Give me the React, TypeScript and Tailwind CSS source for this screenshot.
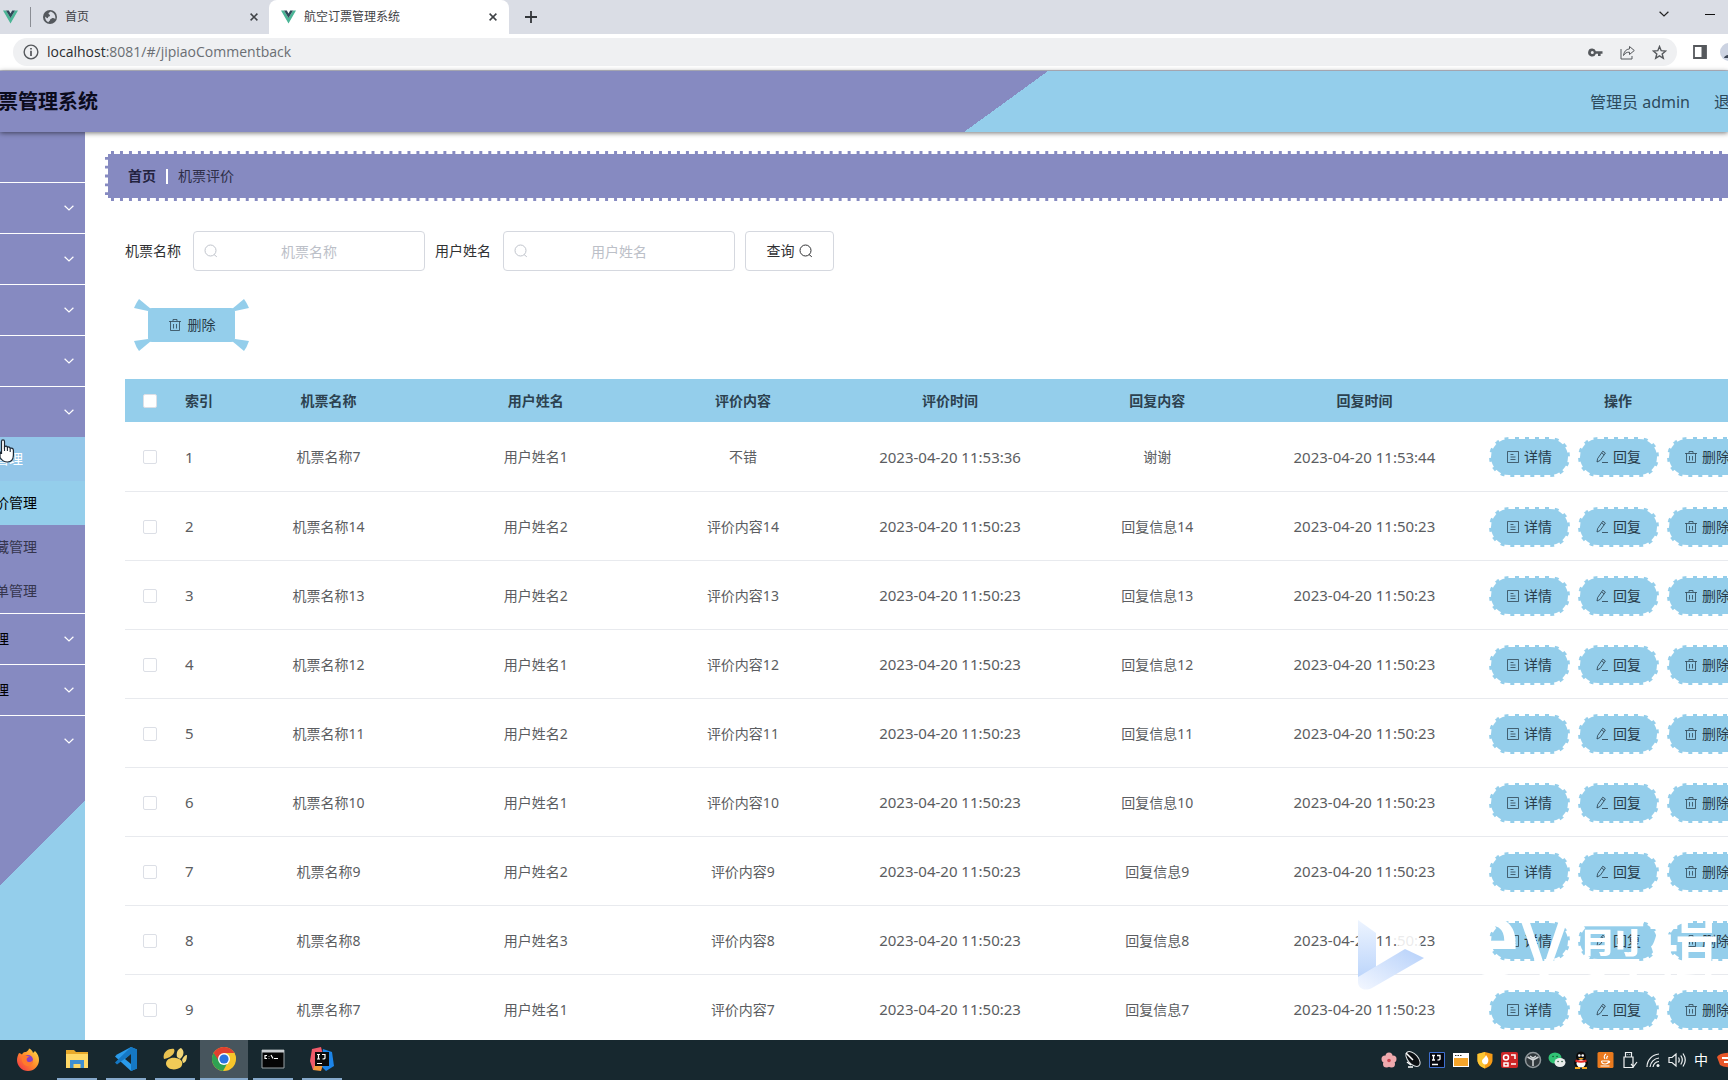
import type { ReactNode } from "react";

type Row = { id: number; ticket: string; user: string; content: string; time: string; reply: string; replyTime: string };

const T = "2023-04-20 11:50:23";

const rows: Row[] = [
  { id: 1, ticket: "机票名称7", user: "用户姓名1", content: "不错", time: "2023-04-20 11:53:36", reply: "谢谢", replyTime: "2023-04-20 11:53:44" },
  { id: 2, ticket: "机票名称14", user: "用户姓名2", content: "评价内容14", time: T, reply: "回复信息14", replyTime: T },
  { id: 3, ticket: "机票名称13", user: "用户姓名2", content: "评价内容13", time: T, reply: "回复信息13", replyTime: T },
  { id: 4, ticket: "机票名称12", user: "用户姓名1", content: "评价内容12", time: T, reply: "回复信息12", replyTime: T },
  { id: 5, ticket: "机票名称11", user: "用户姓名2", content: "评价内容11", time: T, reply: "回复信息11", replyTime: T },
  { id: 6, ticket: "机票名称10", user: "用户姓名1", content: "评价内容10", time: T, reply: "回复信息10", replyTime: T },
  { id: 7, ticket: "机票名称9", user: "用户姓名2", content: "评价内容9", time: T, reply: "回复信息9", replyTime: T },
  { id: 8, ticket: "机票名称8", user: "用户姓名3", content: "评价内容8", time: T, reply: "回复信息8", replyTime: T },
  { id: 9, ticket: "机票名称7", user: "用户姓名1", content: "评价内容7", time: T, reply: "回复信息7", replyTime: T },
];

function VueLogo() {
  return (
    <svg className="h-[14px] w-[15px] shrink-0" viewBox="0 0 15 14" aria-hidden="true">
      <path d="M0 .5h3L7.500 8 12 .5h3L7.500 13.500z" fill="#4bb596" />
      <path d="M3 .5h2.800L7.500 3.500 9.200.5H12L7.500 8z" fill="#2f4858" />
    </svg>
  );
}

function GlobeIcon() {
  return (
    <svg className="h-[14px] w-[14px] shrink-0" viewBox="0 0 14 14" aria-hidden="true">
      <circle cx="7" cy="7" r="7" fill="#54585d" />
      <path d="M7.500 1.500c-.8 1.300-2 1-2 2s1.500.8 1.500 2-2 .8-2 2-1 .6-3-1c0 3 1.500 5 3.500 5.800 0-1.500 1.500-1 1.500-2.300 0-1 1-.7 2-1.700.8-.8 2-.3 3.300.7.600-3-1-6.500-4.800-7.500z" fill="#dadde5" />
    </svg>
  );
}

function CloseIcon() {
  return (
    <svg className="h-2 w-2" viewBox="0 0 8 8" aria-hidden="true">
      <path d="M.6.6l6.800 6.800M7.400.6L.6 7.400" stroke="#3f4246" strokeWidth="1.500" />
    </svg>
  );
}

function SearchIcon() {
  return (
    <svg className="h-[14px] w-[14px] shrink-0" viewBox="0 0 14 14" fill="none" stroke="currentColor" aria-hidden="true">
      <circle cx="6.500" cy="6.500" r="5.500" />
      <path d="M10 10.500l2.800 2.300" />
    </svg>
  );
}

function TrashIcon() {
  return (
    <svg className="h-[14px] w-[14px] shrink-0" viewBox="0 0 14 14" fill="none" stroke="currentColor" strokeOpacity=".75" aria-hidden="true">
      <path d="M1 3.500h12M2.500 3.500v9h9v-9M5 3V1.500h4V3M5.500 6v4.500M8.500 6v4.500" />
    </svg>
  );
}

function DetailIcon() {
  return (
    <svg className="h-[14px] w-[14px] shrink-0" viewBox="0 0 14 14" fill="none" stroke="currentColor" strokeOpacity=".75" aria-hidden="true">
      <path d="M1.500 1.500h11v11h-11zM4.500 4.500h3M4.500 7h5M4.500 9.500h5" />
    </svg>
  );
}

function EditIcon() {
  return (
    <svg className="h-[14px] w-[14px] shrink-0" viewBox="0 0 14 14" fill="none" stroke="currentColor" strokeOpacity=".8" aria-hidden="true">
      <path d="M2 12l.6-3.400L7.800 1.200l2.600 1.800-5.200 7.400zM6.600 3l2.600 1.800M7 12.500h6" />
    </svg>
  );
}

function ChevronDown() {
  return (
    <svg className="h-[6px] w-[10px]" viewBox="0 0 10 6" fill="none" stroke="currentColor" strokeWidth="1.200" aria-hidden="true">
      <path d="M.6.7L5 5 9.400.7" />
    </svg>
  );
}

function BrowserChrome() {
  return (
    <div className="shrink-0 bg-white">
      <div className="flex h-[34px] items-stretch bg-[#dadde5]">
        <div className="flex w-[269px] shrink-0 items-center pr-[7px]">
          <span className="ml-[3px]"><VueLogo /></span>
          <span className="ml-3 h-5 w-px bg-[#8a8d94]" />
          <span className="ml-3"><GlobeIcon /></span>
          <span className="ml-2 grow text-xs text-[#3f4246]">首页</span>
          <button aria-label="关闭首页" className="p-1"><CloseIcon /></button>
        </div>
        <div className="flex w-[240px] shrink-0 items-center rounded-t-lg bg-white pr-2 pl-3">
          <VueLogo />
          <span className="ml-2 grow text-xs text-[#3f4246]">航空订票管理系统</span>
          <button aria-label="关闭标签" className="p-1"><CloseIcon /></button>
        </div>
        <button aria-label="新标签页" className="ml-4 self-center">
          <svg className="h-3 w-3" viewBox="0 0 12 12" aria-hidden="true">
            <path d="M6 0v12M0 6h12" stroke="#33363a" strokeWidth="1.800" />
          </svg>
        </button>
        <div className="ml-auto flex items-center gap-9 pr-[13px] pb-1.5 text-[#222]">
          <ChevronDown />
          <span className="h-px w-[10px] bg-[#111]" />
        </div>
      </div>
      <div className="flex h-[37px] items-center border-b border-[#c3c4d0] pl-[13px]">
        <div className="flex h-7 grow items-center rounded-full bg-[#eff0f2] px-[10px]">
          <svg className="h-4 w-4 shrink-0" viewBox="0 0 14 14" fill="none" stroke="#55585c" strokeWidth="1.200" aria-hidden="true">
            <circle cx="7" cy="7" r="6" />
            <path d="M7 6v4.500M7 3.400v1.400" strokeWidth="1.500" />
          </svg>
          <p className="ml-2 grow font-['Open_Sans','Noto_Sans_CJK_SC',sans-serif] text-sm text-[#6a6e73]">
            <span className="text-[#2a2c30]">localhost</span>:8081/#/jipiaoCommentback
          </p>
          <div className="flex items-center gap-[17px] text-[#55585c]">
            <svg className="h-[15px] w-[15px]" viewBox="0 0 15 15" aria-hidden="true">
              <path d="M4.300 3.500a4 4 0 1 0 3.600 5.300H10V11h2.600V8.800H14.500V6.200H7.900A4 4 0 0 0 4.300 3.500zm0 2.500a1.500 1.500 0 1 1 0 3 1.500 1.500 0 0 1 0-3z" fill="currentColor" />
            </svg>
            <svg className="h-[15px] w-[15px]" viewBox="0 0 15 15" fill="none" stroke="currentColor" aria-hidden="true">
              <path d="M1 4v10h11v-3M9.500 1.500L14.300 5.500 9.500 9.500V7.200C6.800 7 5 8 3.500 10.500 4 6.500 6 4.200 9.500 3.900z" />
            </svg>
            <svg className="h-[15px] w-[15px]" viewBox="0 0 15 15" fill="none" stroke="currentColor" strokeWidth="1.400" aria-hidden="true">
              <path d="M7.500 1.500l1.700 4.200 4.500.3-3.500 2.900 1.100 4.400-3.800-2.400-3.800 2.400 1.100-4.400L1.300 6l4.500-.3z" />
            </svg>
          </div>
        </div>
        <div className="flex w-[51px] shrink-0 items-center gap-[13px] overflow-hidden pl-4">
          <svg className="h-[14px] w-[14px] shrink-0" viewBox="0 0 14 14" aria-hidden="true">
            <path d="M1 1h12v12H1z" fill="none" stroke="#55585c" strokeWidth="1.800" />
            <path d="M8.500 1H13v12H8.500z" fill="#55585c" />
          </svg>
          <svg className="h-[18px] w-[18px] shrink-0" viewBox="0 0 18 18" aria-hidden="true">
            <circle cx="9" cy="9" r="9" fill="#ccd3e2" />
            <path d="M4 15c1-4 9-4 10 0z" fill="#3c4656" />
          </svg>
        </div>
      </div>
    </div>
  );
}

function MenuItem({ label = "", chevron = true, line = true }: { label?: string; chevron?: boolean; line?: boolean }) {
  return (
    <a href="#menu" aria-label={label || "菜单"} className={line ? "flex h-[51px] items-center justify-between border-b border-white pr-[11px] text-black" : "flex h-[50px] items-center justify-between pr-[11px] text-black"}>
      <span className="flex w-[9px] justify-end overflow-hidden text-sm">{label}</span>
      <span className="text-white">{chevron && <ChevronDown />}</span>
    </a>
  );
}

function Sidebar() {
  return (
    <nav className="w-[85px] shrink-0 bg-[linear-gradient(135deg,#868ac1_533px,#94ceeb_533px)] whitespace-nowrap">
      <MenuItem chevron={false} />
      <MenuItem />
      <MenuItem />
      <MenuItem />
      <MenuItem />
      <MenuItem line={false} />
      <div className="border-b border-white text-sm">
        <a href="#manage" className="relative flex h-11 items-center bg-[#93c6e9] text-white">
          <span className="flex w-[23px] justify-end overflow-hidden">管理</span>
          <svg className="absolute top-0.5 left-0 h-6 w-[15px]" viewBox="0 0 15 24" aria-hidden="true">
            <path d="M1.500 14V2.500c0-2.200 3-2.200 3 0V8c1-1.500 2.700-.8 2.900.4 1.200-.9 2.600-.3 2.800.9 1.500-.7 3.200.2 3.200 2V16c0 4-2 7-6 7-3.500 0-5.500-1.500-7.400-4.500V13z" fill="#fff" stroke="#1c2733" strokeWidth="1.200" />
            <path d="M4.500 7v5M7.400 8.500V12M10.200 9.500V13" stroke="#1c2733" strokeWidth="1.100" />
          </svg>
        </a>
        <a href="#comments" className="flex h-11 items-center bg-[#94ceeb] text-black">
          <span className="flex w-[37px] justify-end overflow-hidden">价管理</span>
        </a>
        <a href="#favorites" className="flex h-11 items-center text-[#35354d]">
          <span className="flex w-[37px] justify-end overflow-hidden">藏管理</span>
        </a>
        <a href="#orders" className="flex h-11 items-center text-[#35354d]">
          <span className="flex w-[37px] justify-end overflow-hidden">单管理</span>
        </a>
      </div>
      <MenuItem label="理" />
      <MenuItem label="理" />
      <MenuItem line={false} />
    </nav>
  );
}

function SearchField({ id, label }: { id: string; label: string }) {
  return (
    <div className="flex items-center gap-3">
      <label htmlFor={id} className="text-sm text-[#303133]">{label}</label>
      <div className="relative">
        <span className="absolute top-[13px] left-[11px] text-[#c0c4cc]"><SearchIcon /></span>
        <input id={id} type="text" placeholder={label} className="h-10 w-[232px] rounded border border-[#d5d8df] bg-white px-8 text-center text-sm placeholder:text-[#bcc0c8]" />
      </div>
    </div>
  );
}

function ActionButton({ icon, children }: { icon: ReactNode; children: string }) {
  return (
    <button className="flex h-10 w-[81px] items-center justify-center gap-1 rounded-[20px] border-2 border-dashed border-white bg-[#94ceeb] text-sm text-[#283c4a]">
      {icon}
      {children}
    </button>
  );
}

function BatchDelete() {
  return (
    <button className="relative flex h-[52px] w-[115px] items-center justify-center text-sm text-[#283c4a]">
      <svg className="absolute inset-0 h-full w-full" viewBox="0 0 115 52" fill="#94ceeb" aria-hidden="true">
        <rect x="14" y="9" width="87" height="34" rx="4" />
        <path d="M0 9Q2 4 5 0L17 10 14 12z" />
        <path d="M115 9Q113 4 110 0L98 10 101 12z" />
        <path d="M0 42Q2 48 5 52L17 42 14 40z" />
        <path d="M115 42Q113 48 110 52L98 42 101 40z" />
      </svg>
      <span className="relative flex items-center gap-1.5">
        <TrashIcon />
        删除
      </span>
    </button>
  );
}

function Check({ label }: { label: string }) {
  return <input type="checkbox" aria-label={label} className="mx-auto block h-[14px] w-[14px] appearance-none rounded-[2px] border border-[#dcdfe6] bg-white" />;
}

function CommentTable() {
  return (
    <table className="w-[calc(100%+40px)] table-fixed border-collapse text-center text-sm text-[#5b5d61]">
      <colgroup>
        <col className="w-[50px]" />
        <col className="w-[50px]" />
        <col /><col /><col /><col /><col /><col />
        <col className="w-[300px]" />
      </colgroup>
      <thead className="bg-[#94ceeb] text-[#2c414f]">
        <tr className="h-[43px]">
          <th><Check label="全选" /></th>
          <th className="pl-2.5 text-left font-bold">索引</th>
          <th className="font-bold">机票名称</th>
          <th className="font-bold">用户姓名</th>
          <th className="font-bold">评价内容</th>
          <th className="font-bold">评价时间</th>
          <th className="font-bold">回复内容</th>
          <th className="font-bold">回复时间</th>
          <th className="font-bold">操作</th>
        </tr>
      </thead>
      <tbody>
        {rows.map((r) => (
          <tr key={r.id} className="h-[69px] border-b border-[#e8eaee] [&>td]:pt-0.5">
            <td><Check label={`选择第${r.id}行`} /></td>
            <td className="pl-2.5 text-left text-[15px]">{r.id}</td>
            <td>{r.ticket}</td>
            <td>{r.user}</td>
            <td>{r.content}</td>
            <td className="text-[15px]">{r.time}</td>
            <td>{r.reply}</td>
            <td className="text-[15px]">{r.replyTime}</td>
            <td>
              <div className="flex justify-center gap-2">
                <ActionButton icon={<DetailIcon />}>详情</ActionButton>
                <ActionButton icon={<EditIcon />}>回复</ActionButton>
                <ActionButton icon={<TrashIcon />}>删除</ActionButton>
              </div>
            </td>
          </tr>
        ))}
      </tbody>
    </table>
  );
}

function Watermark() {
  return (
    <div className="pointer-events-none absolute right-0 bottom-10 flex h-[130px] w-[370px] overflow-hidden pt-2.5 whitespace-nowrap text-white">
      <svg className="h-[70px] w-[70px] shrink-0" viewBox="0 0 70 70" aria-hidden="true">
        <defs>
          <linearGradient id="wmBar" x1="0" y1="0" x2="0" y2="1">
            <stop offset="0" stopColor="#edf4ff" />
            <stop offset="1" stopColor="#bcd5fb" />
          </linearGradient>
          <linearGradient id="wmArm" x1="0" y1="1" x2="1" y2="0">
            <stop offset="0" stopColor="#f3f7ff" />
            <stop offset="1" stopColor="#b5d0fa" />
          </linearGradient>
        </defs>
        <path d="M27 10L48 10 61 18 66 38 47 30 38 24z" fill="#fff" fillOpacity=".88" />
        <path d="M0 0L18 13V47L0 58z" fill="url(#wmBar)" />
        <path d="M0 57L47 29 66 38 14 68C6 72 0 68 0 62z" fill="url(#wmArm)" />
      </svg>
      <div className="ml-8 flex items-baseline leading-7 font-medium">
        <span className="text-[106px] leading-7">e</span>
        <span className="text-[76px] leading-7">V</span>
        <span className="ml-2 text-[72px] leading-7">剪辑</span>
      </div>
    </div>
  );
}

function Task({ children, active, open = true }: { children: ReactNode; active?: boolean; open?: boolean }) {
  return (
    <span className={active ? "flex h-full w-[48px] flex-col items-center bg-[#47555d]" : "flex h-full w-[40px] flex-col items-center"}>
      <span className="flex grow items-center">
        <svg className="h-6 w-6" viewBox="0 0 24 24" aria-hidden="true">{children}</svg>
      </span>
      <span className={open ? "h-0.5 w-full bg-[#86a9cb]" : "h-0.5 w-full"} />
    </span>
  );
}

function Tray({ children }: { children: ReactNode }) {
  return <svg className="h-[18px] w-[18px] shrink-0" viewBox="0 0 18 18" fill="none" aria-hidden="true">{children}</svg>;
}

function Taskbar() {
  return (
    <footer className="flex h-10 shrink-0 items-stretch justify-between overflow-hidden bg-[#17282f]">
      <div className="flex gap-[9px] pl-2">
        <Task open={false}>
          <defs>
            <linearGradient id="fox" x1="1" y1="0" x2="0" y2="1">
              <stop offset="0" stopColor="#ffe24a" />
              <stop offset=".5" stopColor="#ff8a2a" />
              <stop offset="1" stopColor="#f0284e" />
            </linearGradient>
          </defs>
          <path d="M3 6c1 0 2 .5 3 1.500C7 5 9 5 10 5c1-1 2.500-1 3-3.500 2.500 1 3.500 2.500 4 4.500l2-2c3 3 4 6 4 9a11 11 0 0 1-22 0c0-3 1-5 2-7z" fill="url(#fox)" />
          <circle cx="12" cy="13" r="5" fill="#8b3fc2" />
          <path d="M6 9c3-2 6 0 8 1-3 0-4 2-3 4s5 1 6-1c0 4-3 6-6 6-4-1-6-5-5-10z" fill="#ff7a2c" />
        </Task>
        <Task>
          <path d="M1 3h8l2 2h12v16H1z" fill="#e8a92b" />
          <path d="M1 7h22v14H1z" fill="#ffd867" />
          <path d="M5 13h14v8h-3.500v-4h-7v4H5z" fill="#3f8fd2" />
        </Task>
        <Task>
          <path d="M17 0l6 2.500v19L17 24 1 9.500 3 7.500z" fill="#2a9bea" />
          <path d="M17 0l6 2.500v19L17 24V7L3 17.500 1 15.500z" fill="#1578c4" />
          <path d="M17 7v10l-6-5z" fill="#17282f" />
        </Task>
        <Task>
          <path d="M1 12C-1 6 5 1 11 2c2 4-3 9-10 10z" fill="#e9c251" />
          <path d="M14 10c-1-5 1-8 4-9 3 2 4 7-1 11zM19 13c1-3 3-5 5-5 0 4-1 8-4 8z" fill="#f3d777" />
          <path d="M3 17c0-5 5-7 10-6 6 1 8 5 5 9-5 4-14 3-15-3z" fill="#f1cb57" />
        </Task>
        <span className="-mx-1 flex">
          <Task active>
            <circle cx="12" cy="12" r="12" fill="#f7c52b" />
            <path d="M12 12L1.600 6A12 12 0 0 0 11 24l5-9z" fill="#2fa152" />
            <path d="M1.600 6A12 12 0 0 1 22.400 6L12 7 7 14z" fill="#e0402f" />
            <path d="M12 6h10.400c1.500 3 2.300 7-1 12z" fill="#f7c52b" />
            <circle cx="12" cy="12" r="6" fill="#fff" />
            <circle cx="12" cy="12" r="4.600" fill="#2a74e0" />
          </Task>
        </span>
        <Task>
          <path d="M1 3h22v18H1z" fill="#050505" stroke="#9aa2a6" />
          <path d="M1 3h22v2.500H1z" fill="#c9cdd0" />
          <path d="M6 8.500H4v3h2M8 9v.5M8 11v.5M10 8l2 3.500M13 11.500h4" stroke="#fff" strokeWidth="1.200" fill="none" />
        </Task>
        <Task>
          <path d="M2 2l9-2 3 12-3 11H3L0 14z" fill="#ef5a6a" />
          <path d="M13 2l9 3 2 14-8 5-5-5z" fill="#1c84e8" />
          <path d="M3 23l2-6h8l-2 7z" fill="#f49a3c" />
          <path d="M5 5h14v14H5z" fill="#0a0a0a" />
          <path d="M7 7.500h3M8.500 7.500v4.500M7 12h3M12 7.500h3V11q0 1-2.500 1M7 16.500h5" stroke="#fff" strokeWidth="1.200" fill="none" />
        </Task>
      </div>
      <div className="-mr-1.5 flex shrink-0 items-center gap-1.5">
        <Tray>
          <g fill="#efa9ad">
            <circle cx="9" cy="5" r="3.500" /><circle cx="5" cy="8" r="3.500" /><circle cx="13" cy="8" r="3.500" /><circle cx="6.500" cy="13" r="3.500" /><circle cx="11.500" cy="13" r="3.500" />
          </g>
          <circle cx="9" cy="9.500" r="1.800" fill="#c8434e" />
        </Tray>
        <Tray>
          <ellipse cx="9" cy="8" rx="9" ry="5" transform="rotate(48 9 8)" fill="#0b0f12" stroke="#dfe3e5" />
          <path d="M2 2l7 7M3 11l4 3M4 16h5" stroke="#fff" strokeWidth="1.500" />
        </Tray>
        <Tray>
          <path d="M1.500 1.500h15v15h-15z" fill="#05070f" stroke="#3f6fd0" />
          <path d="M4 4.500h3M5.500 4.500V9M4 9h3M9 4.500h3V8q0 1-2.500 1M4 13.500h6" stroke="#fff" strokeWidth="1.300" />
        </Tray>
        <Tray>
          <path d="M1 2h16v14H1z" fill="#fff" />
          <path d="M2 7h14v8H2z" fill="#f5a52b" />
          <path d="M3 4.500h7" stroke="#333" strokeWidth="1.200" strokeDasharray="1.500 1" />
        </Tray>
        <Tray>
          <path d="M9 1l7.500 2v6c0 4-3 7-7.500 8.500C4.500 16 1.500 13 1.500 9V3z" fill="#f59a16" />
          <path d="M9 1v16.500C4.500 16 1.500 13 1.500 9V3z" fill="#fbc634" />
          <path d="M10 4c3 4 3 6 1 9-2 1-5 0-5-3 0-2 3-3 4-6z" fill="#fff" />
        </Tray>
        <Tray>
          <rect x="1" y="1" width="17" height="16" rx="2" fill="#cc2527" />
          <circle cx="6" cy="6.500" r="2.500" stroke="#fff" strokeWidth="1.500" />
          <path d="M11 4h4v4M4 12h4v3H4zM11 13h5" stroke="#fff" strokeWidth="1.500" />
        </Tray>
        <Tray>
          <circle cx="9" cy="9" r="7.500" stroke="#8f979b" strokeWidth="1.500" fill="#30383c" />
          <path d="M9 9v6M9 9L3.500 6M9 9l5.500-3M6 5l3 2 3-2" stroke="#d2d6d8" strokeWidth="1.500" />
        </Tray>
        <Tray>
          <ellipse cx="7" cy="7" rx="6.500" ry="5.500" fill="#31c375" />
          <ellipse cx="12" cy="11.500" rx="5.500" ry="4.500" fill="#e9eceb" />
          <path d="M5 5.500h.1M9 5.500h.1M10 10.500h.1M14 10.500h.1" stroke="#17482c" strokeWidth="1.400" strokeLinecap="round" />
        </Tray>
        <Tray>
          <ellipse cx="9" cy="6" rx="5" ry="5.500" fill="#0c0c0c" />
          <ellipse cx="9" cy="12" rx="7" ry="5" fill="#0c0c0c" />
          <ellipse cx="9" cy="12.500" rx="4.500" ry="4" fill="#fff" />
          <circle cx="7.300" cy="4.500" r="1.300" fill="#fff" /><circle cx="10.700" cy="4.500" r="1.300" fill="#fff" />
          <path d="M6 7h6l-3 1.800z" fill="#f2a51c" />
          <path d="M3.500 9.500q5.500 2.500 11 0" stroke="#e02a25" strokeWidth="2" />
          <path d="M3 17h5M10 17h5" stroke="#f2a51c" strokeWidth="2" />
        </Tray>
        <Tray>
          <rect x="1.500" y="1" width="16" height="16" rx="1.500" fill="#ea7a1e" />
          <path d="M10 3q-3 2-1 5M12 5q-2 1-1 3M5.500 10h7q0 3-3.500 3T5.500 10M12.500 10q2.500.5 0 2M4.500 15h9" stroke="#fff" strokeWidth="1.100" />
        </Tray>
        <Tray>
          <path d="M5.500 6V1.500h6V6M4 6h9v10.500H4zM7.500 3.500v.5M9.500 3.500v.5" stroke="#eef1f2" strokeWidth="1.200" />
          <path d="M11 13l2.500 2.500L17 11" stroke="#eef1f2" strokeWidth="1.200" />
        </Tray>
        <Tray>
          <path d="M3 16A13 13 0 0 1 15 3M6 16A10 10 0 0 1 15 7M9 16A7 7 0 0 1 15 10.500" stroke="#eef1f2" strokeWidth="1.200" />
          <circle cx="14" cy="14.500" r="1.500" fill="#eef1f2" />
        </Tray>
        <Tray>
          <path d="M1 6.500h3L8 3v12l-4-3.500H1zM10.500 6.500q1.500 2.500 0 5M12.800 4.500q3 4.500 0 9M15 2.500q4.500 6.500 0 13" stroke="#eef1f2" strokeWidth="1.200" />
        </Tray>
        <span className="w-[18px] text-center text-sm text-white">中</span>
        <Tray>
          <path d="M1 6q3-5 17-4v14q-10 1-14-2z" fill="#e8572a" />
          <path d="M6 7h12M8 11h10" stroke="#fff" strokeWidth="2" />
        </Tray>
      </div>
    </footer>
  );
}

export default function App() {
  return (
    <div className="flex h-screen flex-col overflow-hidden bg-white font-['Noto_Sans','Noto_Sans_CJK_SC',sans-serif]">
      <BrowserChrome />
      <header className="relative z-10 flex h-[61px] shrink-0 items-center justify-between bg-[linear-gradient(144deg,#868ac1_616px,#94ceeb_616px)] whitespace-nowrap shadow-[0_1px_5px_rgba(0,0,0,0.55)]">
        <h1 className="-ml-0.5 text-xl font-bold text-[#0b0b1c]">票管理系统</h1>
        <div className="flex w-[138px] gap-6 overflow-hidden text-base text-[#2d4a5c]">
          <span>管理员 admin</span>
          <a href="#logout">退</a>
        </div>
      </header>
      <div className="flex min-h-0 grow">
        <Sidebar />
        <main className="min-w-0 grow overflow-hidden pt-[19px] pl-5">
          <div className="flex h-[50px] items-center gap-2.5 border-y-[3px] border-l-[3px] border-dashed border-white bg-[#868ac1] pl-5 text-sm">
            <a href="#home" className="font-bold text-[#23233f]">首页</a>
            <span className="h-[15px] w-0.5 bg-white" />
            <span className="text-[#2e2e48]">机票评价</span>
          </div>
          <div className="pl-5">
            <form className="mt-[30px] flex items-center gap-2.5">
              <SearchField id="ticket" label="机票名称" />
              <SearchField id="user" label="用户姓名" />
              <button type="button" className="flex h-10 w-[89px] items-center justify-center gap-1 rounded border border-[#d5d8df] text-sm text-[#303133]">
                查询
                <SearchIcon />
              </button>
            </form>
            <div className="mt-7 mb-7 pl-[9px]">
              <BatchDelete />
            </div>
            <CommentTable />
          </div>
        </main>
      </div>
      <Watermark />
      <Taskbar />
    </div>
  );
}
